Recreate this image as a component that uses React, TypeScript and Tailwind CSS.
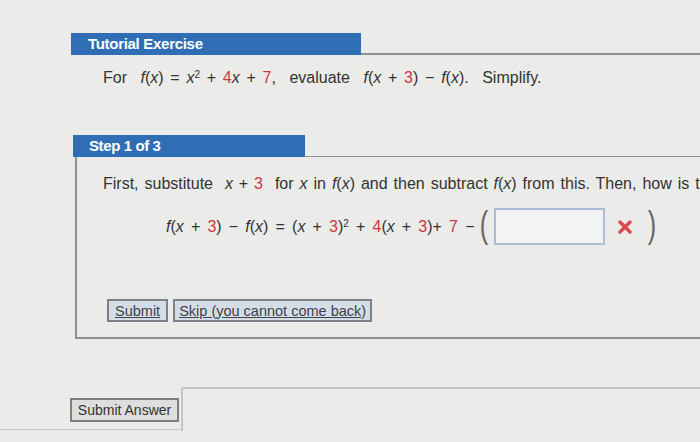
const red = "text-[#c9383f]";

function F() {
  return <span className="italic">f</span>;
}

function X() {
  return <span className="italic">x</span>;
}

export default function App() {
  return (
    <div className="w-[700px] h-[442px] overflow-hidden bg-[#ebebe9] text-[#333] font-['Liberation_Sans',Arial,sans-serif]">
      {/* tutorial header */}
      <div className="pt-[33px] pl-[71px] flex items-end">
        <div className="w-[290px] h-[22px] bg-[#2f6db4] text-white font-bold text-[15px] leading-[22px] pl-[17px] tracking-[-0.3px]">
          Tutorial Exercise
        </div>
        <div className="flex-1 border-b-2 border-[#8c9199]" />
      </div>

      <div className="pl-[103px] mt-[13px] text-[16px] leading-[20px] whitespace-nowrap [word-spacing:2.3px]">
        For&nbsp; <F />(<X />) = <X />
        <sup className="text-[10px]">2</sup> + <span className={red}>4</span>
        <X /> + <span className={red}>7</span>,&nbsp; evaluate&nbsp; <F />(<X /> +{" "}
        <span className={red}>3</span>) − <F />(<X />).&nbsp; Simplify.
      </div>

      {/* step box */}
      <div className="mt-[47px] pl-[73px]">
        <div className="flex items-end">
          <div className="w-[232px] h-[22px] bg-[#2f6db4] text-white font-bold text-[15px] leading-[22px] pl-[16px] tracking-[-0.4px]">
            Step 1 of 3
          </div>
          <div className="flex-1 border-b border-[#8c9199]" />
        </div>
        <div className="ml-[2px] w-[700px] h-[182px] border-l-2 border-b-2 border-[#8c9199]">
          <div className="pl-[26px] pt-[17px] text-[16px] leading-[20px] whitespace-nowrap [word-spacing:1.5px]">
            First, substitute&nbsp; <X /> + <span className={red}>3</span>&nbsp; for <X /> in{" "}
            <F />(<X />) and then subtract <F />(<X />) from this. Then, how is t
          </div>
          <div className="pl-[89px] mt-[14px] flex items-center text-[16px] whitespace-nowrap">
            <span className="[word-spacing:2.7px]">
              <F />(<X /> + <span className={red}>3</span>) − <F />(<X />) = (<X /> +{" "}
              <span className={red}>3</span>)<sup className="text-[10px]">2</sup> +{" "}
              <span className={red}>4</span>(<X /> + <span className={red}>3</span>)+{" "}
              <span className={red}>7</span> −
            </span>
            <span className="ml-[3px] text-[36px] font-light leading-none text-[#666] scale-x-[0.7] -mt-[4px]">
              (
            </span>
            <div className="ml-[4px] w-[111px] h-[37px] border-2 border-[#a9bfd6] bg-[#f2f3f2]" />
            <svg className="ml-[13px]" width="14" height="14" viewBox="0 0 14 14">
              <path d="M2 2 L12 12 M12 2 L2 12" stroke="#e0464d" strokeWidth="3.4" strokeLinecap="round" />
            </svg>
            <span className="ml-[14px] text-[36px] font-light leading-none text-[#666] scale-x-[0.7] -mt-[4px]">
              )
            </span>
          </div>
          <div className="pl-[30px] mt-[54px] flex gap-[5px]">
            <button className="h-[23px] px-[6px] bg-[#d5dde6] border-2 border-[#7d8187] text-[14.5px] leading-[18px] underline text-[#3c4250]">
              Submit
            </button>
            <button className="h-[23px] px-[4px] bg-[#d5dde6] border-2 border-[#7d8187] text-[14.5px] leading-[18px] underline text-[#3c4250]">
              Skip (you cannot come back)
            </button>
          </div>
        </div>
      </div>

      {/* bottom bar */}
      <div className="mt-[48px] flex items-start">
        <div className="w-[181px] h-[43px] border-b border-[#c4c4c2] pl-[70px] pt-[11px] shrink-0">
          <button className="h-[24px] w-[109px] bg-[#dedede] border-2 border-[#7d7d7d] text-[14px] leading-[18px] text-[#333]">
            Submit Answer
          </button>
        </div>
        <div className="flex-1 h-[44px] border-t-2 border-l-2 border-[#c4c4c2] rounded-tl-[3px]" />
      </div>
    </div>
  );
}
